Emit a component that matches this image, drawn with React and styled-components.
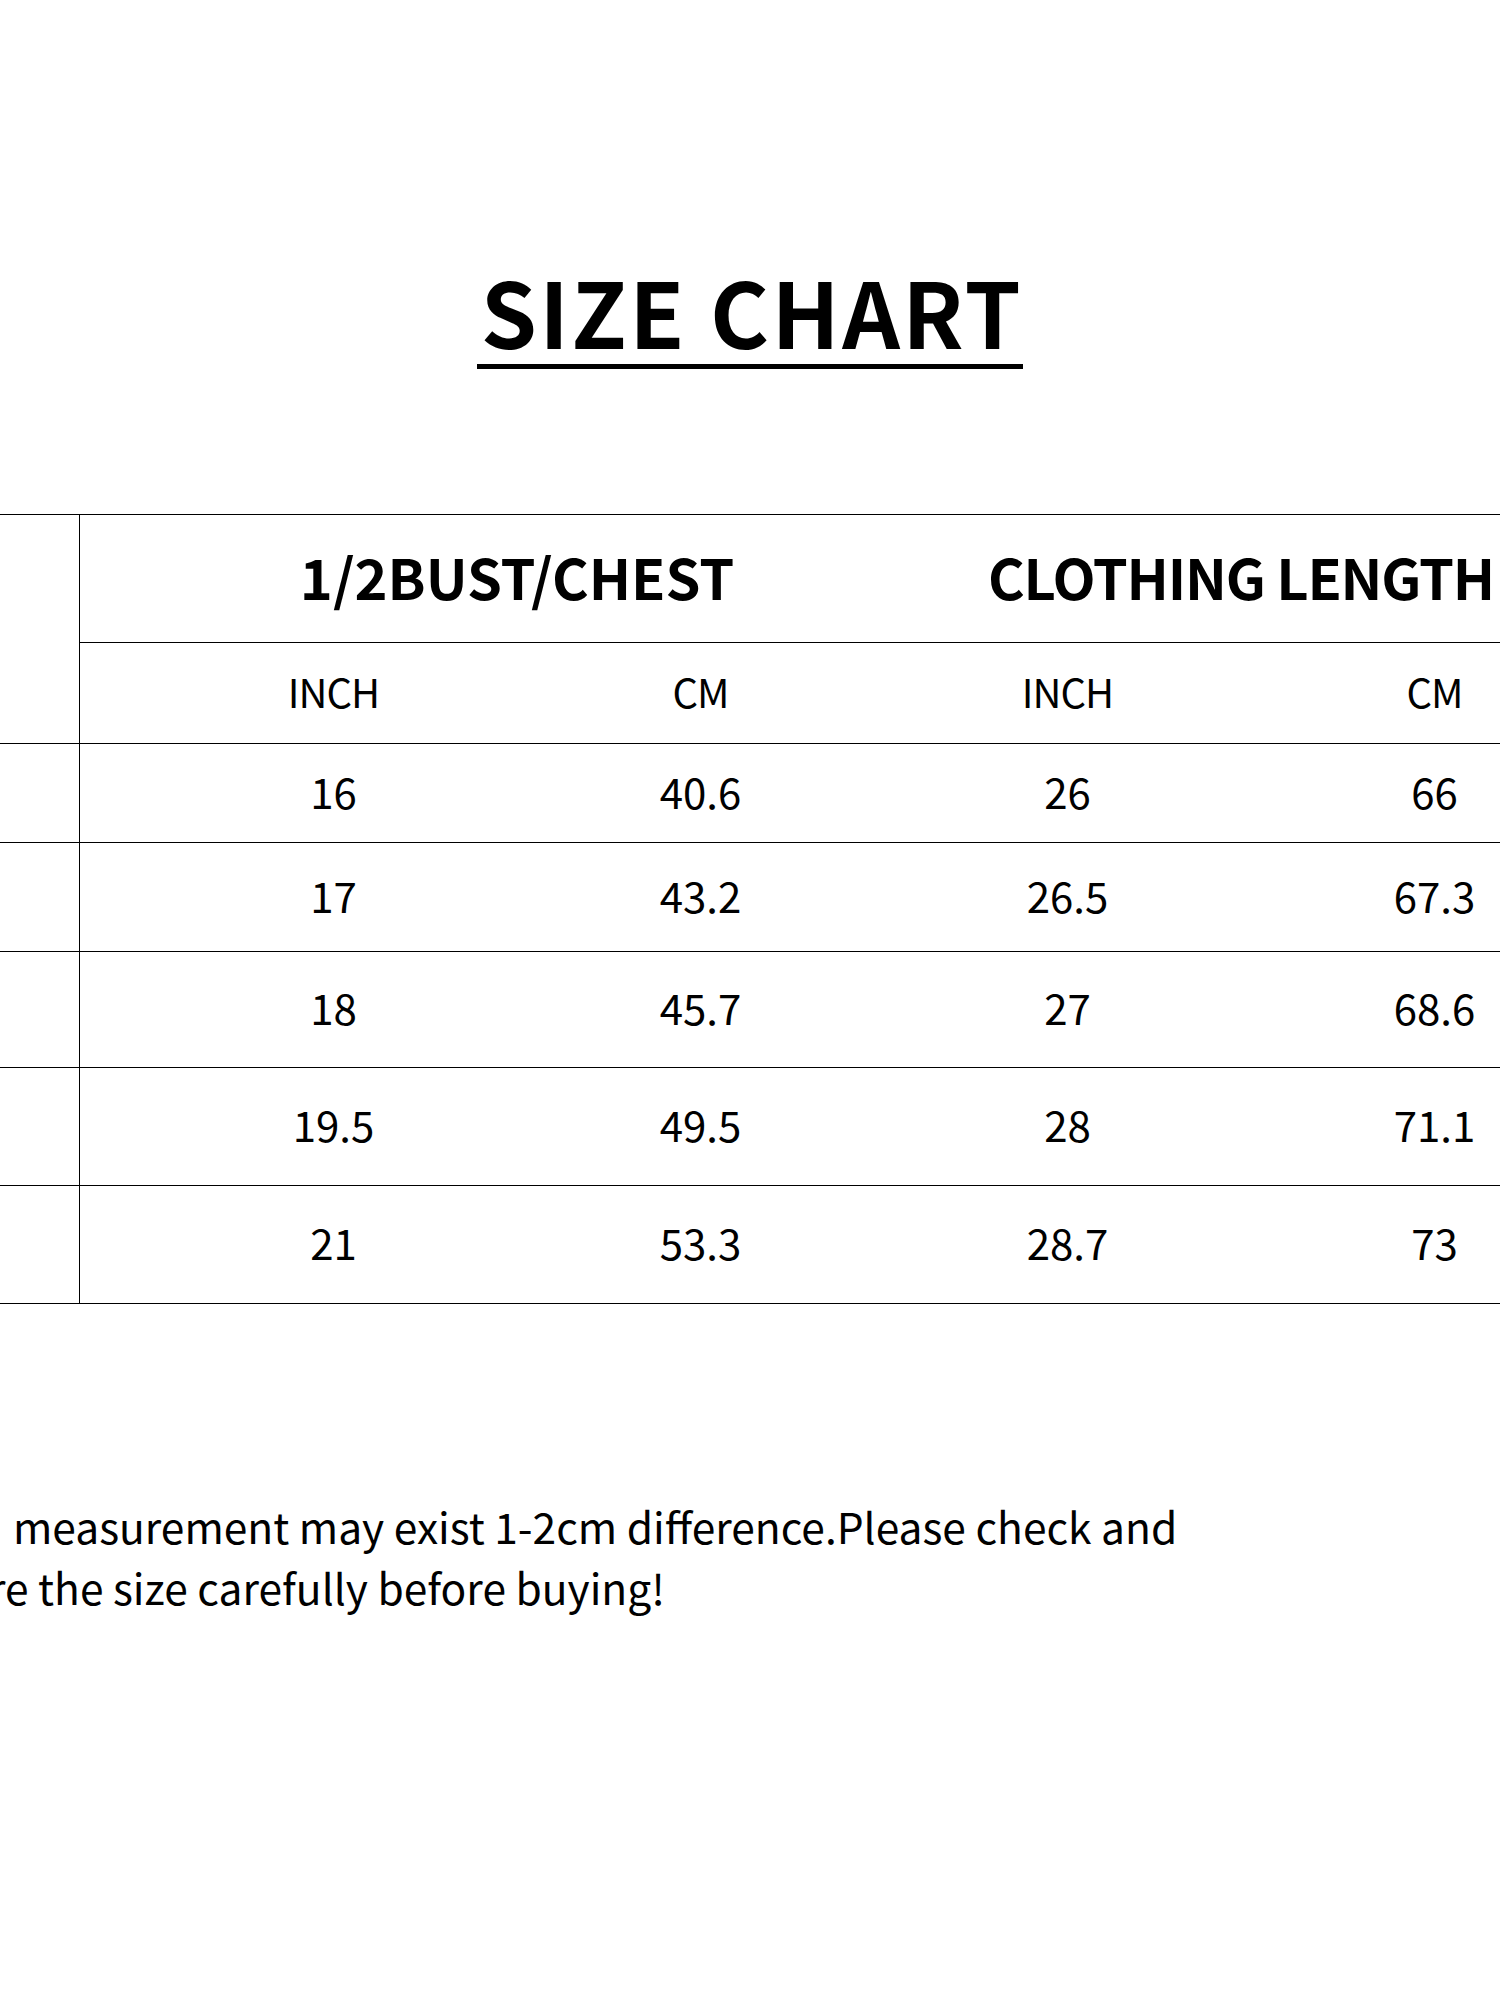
import styled, { createGlobalStyle } from 'styled-components';

const GlobalStyle = createGlobalStyle`
  html, body {
    margin: 0;
    padding: 0;
    background: #fff;
  }
  body {
    font-family: "Noto Sans CJK SC", "Noto Sans", sans-serif;
    color: #000;
  }
`;

const rows = [
  { id: 's', inch: '16', cm: '40.6', lenInch: '26', lenCm: '66' },
  { id: 'm', inch: '17', cm: '43.2', lenInch: '26.5', lenCm: '67.3' },
  { id: 'l', inch: '18', cm: '45.7', lenInch: '27', lenCm: '68.6' },
  { id: 'xl', inch: '19.5', cm: '49.5', lenInch: '28', lenCm: '71.1' },
  { id: 'xxl', inch: '21', cm: '53.3', lenInch: '28.7', lenCm: '73' },
];

export default function App() {
  return (
    <Page>
      <GlobalStyle />
      <TitleWrap>
        <Title>SIZE CHART</Title>
      </TitleWrap>

      <Table>
        <SizeCell $span={2} />
        <GroupHead $lead>1/2BUST/CHEST</GroupHead>
        <GroupHead $trail $tight>CLOTHING LENGTH</GroupHead>
        <SubHead $lead>INCH</SubHead>
        <SubHead>CM</SubHead>
        <SubHead>INCH</SubHead>
        <SubHead>CM</SubHead>

        {rows.map((row) => (
          <Row key={row.id}>
            <SizeCell />
            <Cell $lead>{row.inch}</Cell>
            <Cell>{row.cm}</Cell>
            <Cell>{row.lenInch}</Cell>
            <Cell>{row.lenCm}</Cell>
          </Row>
        ))}
      </Table>

      <Notes>
        <NoteLine $shift={13}>measurement may exist 1-2cm difference.Please check and</NoteLine>
        <NoteLine $shift={-11}>re the size carefully before buying!</NoteLine>
      </Notes>
    </Page>
  );
}

const Page = styled.div`
  width: 1500px;
  height: 2000px;
  overflow: hidden;
  padding-top: 265px;
  box-sizing: border-box;
`;

const TitleWrap = styled.div`
  display: flex;
  justify-content: center;
`;

const Title = styled.h1`
  margin: 0;
  font-size: 90px;
  font-weight: 700;
  line-height: 1;
  letter-spacing: 2.5px;
  padding: 0 0 9px 4px;
  border-bottom: 5px solid #000;
`;

const Table = styled.div`
  display: grid;
  grid-template-columns: 80px 437px 367px 367px 367px;
  grid-template-rows: 128px 101px 99px 109px 116px 118px 118px;
  width: max-content;
  margin-top: 145px;
  border-top: 1px solid #000;
`;

const Row = styled.div`
  display: contents;
`;

const Cell = styled.div`
  display: flex;
  align-items: center;
  justify-content: center;
  box-sizing: border-box;
  padding-left: ${(p) => (p.$lead ? '70px' : '0')};
  padding-right: ${(p) => (p.$trail ? '20px' : '0')};
  padding-bottom: 5px;
  border-bottom: 1px solid #000;
  font-size: 42px;
  line-height: 1;
`;

const SubHead = styled(Cell)`
  font-size: 40px;
  letter-spacing: -1px;
`;

const GroupHead = styled(Cell)`
  grid-column: span 2;
  font-size: 56px;
  font-weight: 700;
  letter-spacing: ${(p) => (p.$tight ? '-1.2px' : '0')};
  padding-bottom: 6px;
`;

const SizeCell = styled.div`
  grid-row: span ${(p) => p.$span || 1};
  box-sizing: border-box;
  border-right: 1px solid #000;
  border-bottom: 1px solid #000;
`;

const Notes = styled.div`
  margin-top: 191px;
  font-size: 42.5px;
  line-height: 61px;
`;

const NoteLine = styled.div`
  margin-left: ${(p) => p.$shift}px;
  white-space: pre;
`;
